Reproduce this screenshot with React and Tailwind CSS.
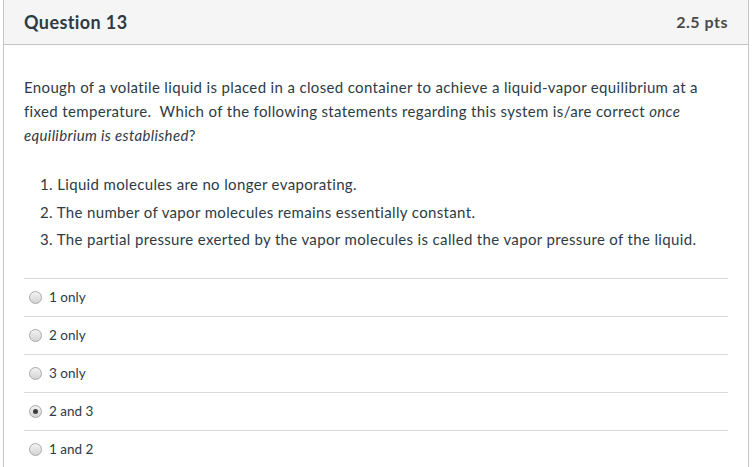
import React from 'react';

const answers = [
  { id: 'a1', label: '1 only' },
  { id: 'a2', label: '2 only' },
  { id: 'a3', label: '3 only' },
  { id: 'a4', label: '2 and 3', checked: true },
  { id: 'a5', label: '1 and 2' },
];

const statements = [
  'Liquid molecules are no longer evaporating.',
  'The number of vapor molecules remains essentially constant.',
  'The partial pressure exerted by the vapor molecules is called the vapor pressure of the liquid.',
];

const Radio = ({ checked }) => (
  <span className="flex h-[13px] w-[13px] shrink-0 items-center justify-center rounded-full border border-[#a9a9a9] bg-gradient-to-b from-[#f2f2f2] to-[#d4d4d4]">
    {checked && <span className="h-[5px] w-[5px] rounded-full bg-[#3d3d3d]" />}
  </span>
);

const App = () => {
  return (
    <div className="min-h-screen bg-white pl-[3px] pr-[5px] text-[#2d3b45]" style={{ fontFamily: 'Lato, "Open Sans", sans-serif' }}>
      <div className="border-x border-[#c4c4c4]">
        {/* header */}
        <div className="flex h-[45px] items-center justify-between border-b border-[#c4c4c4] bg-[#f5f5f5] px-[20px]">
          <h2 className="text-[18px] font-bold tracking-[0.4px] text-[#2d3b45]">Question 13</h2>
          <span className="text-[16px] font-bold tracking-[0.5px] text-[#4a4a4a]">2.5 pts</span>
        </div>

        <div className="px-[20px] pt-[30px] text-[15px] tracking-[0.35px]">
          <p className="leading-[24px]">
            Enough of a volatile liquid is placed in a closed container to achieve a liquid-vapor equilibrium at a fixed temperature.&nbsp; Which of the following statements regarding this system is/are correct <em>once equilibrium is established</em>?
          </p>

          <ol className="mt-[24px] pl-[16px]">
            {statements.map((s, i) => (
              <li key={i} className="leading-[27.5px]">
                {i + 1}. {s}
              </li>
            ))}
          </ol>

          <div className="mt-[24px]">
            {answers.map((a) => (
              <label key={a.id} className="flex h-[38px] items-center gap-[7px] border-t border-[#dadada] pl-[5px] text-[13.5px] tracking-normal">
                <Radio checked={a.checked} />
                <span>{a.label}</span>
              </label>
            ))}
          </div>
        </div>
      </div>
    </div>
  );
};

export default App;
